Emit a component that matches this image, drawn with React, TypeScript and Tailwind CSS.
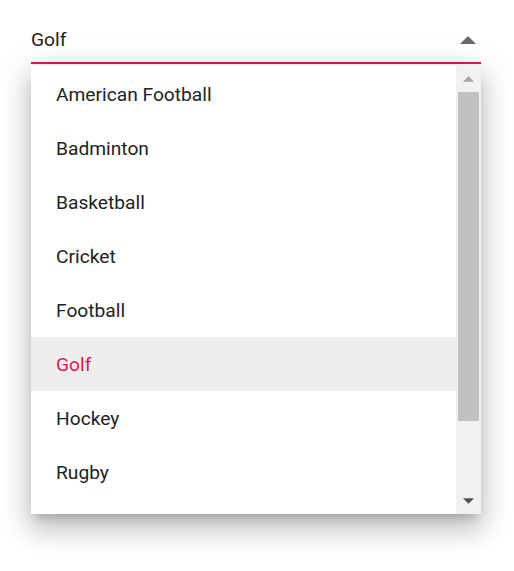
import { useState } from 'react'

const SPORTS = ['American Football', 'Badminton', 'Basketball', 'Cricket', 'Football', 'Golf', 'Hockey', 'Rugby']

function Caret({ up, className }: { up: boolean; className: string }) {
  return (
    <svg viewBox="0 0 16 8" className={className}>
      <path d={up ? 'M0 8 L8 0 L16 8 Z' : 'M0 0 L16 0 L8 8 Z'} fill="currentColor" />
    </svg>
  )
}

export default function App() {
  const [value, setValue] = useState('Golf')

  return (
    <div className="w-[514px] h-[571px] bg-white pt-[22px] pl-[31px] font-['Roboto','Liberation_Sans',sans-serif]">
      <div className="w-[450px] h-[42px] pb-[5px] flex items-center justify-between border-b-2 border-[#e3165b]">
        <span className="text-[19.2px] leading-none text-[#222]">{value}</span>
        <Caret up className="w-[16px] h-[8px] mr-[5px] mt-[1px] text-[#6b6b6b]" />
      </div>

      <div className="mt-[2px] w-[450px] h-[448px] flex bg-white shadow-[0_8px_10px_-5px_rgba(0,0,0,0.2),0_16px_24px_2px_rgba(0,0,0,0.14),0_6px_30px_5px_rgba(0,0,0,0.12)]">
        <ul className="flex-1 overflow-hidden pt-[1px]">
          {SPORTS.map((s) => (
            <li
              key={s}
              onClick={() => setValue(s)}
              className={`h-[54px] pl-[25px] pt-[2px] flex items-center text-[19.2px] leading-none cursor-pointer ${s === value ? 'bg-[#eeeeee] text-[#e3165b]' : 'text-[#222]'}`}
            >
              {s}
            </li>
          ))}
        </ul>
        <div className="w-[25px] bg-[#f1f1f1] flex flex-col">
          <div className="h-[26px] flex items-center justify-center">
            <Caret up className="w-[11px] h-[6px] text-[#a3a3a3]" />
          </div>
          <div className="h-[329px] mx-[2px] bg-[#c1c1c1]" />
          <div className="flex-1" />
          <div className="h-[26px] flex items-center justify-center">
            <Caret up={false} className="w-[11px] h-[6px] text-[#505050]" />
          </div>
        </div>
      </div>
    </div>
  )
}
